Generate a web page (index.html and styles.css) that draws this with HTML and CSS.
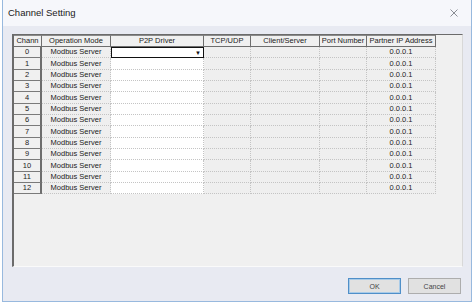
FILE: index.html
```html
<!DOCTYPE html>
<html lang="en">
<head>
<meta charset="UTF-8" />
<title>Channel Setting</title>
<link rel="stylesheet" href="styles.css">
</head>
<body>
<div class="dialog">
  <div class="titlebar">
    <span class="title">Channel Setting</span>
    <svg class="close" width="8" height="8" viewBox="0 0 8 8"><path d="M0.5 0.5 L7.5 7.5 M7.5 0.5 L0.5 7.5" stroke="#8a8d94" stroke-width="1"/></svg>
  </div>
  <div class="content">
    <div class="panel">
      <div class="grid" id="grid">
        <div class="hd">Chann</div>
        <div class="hd">Operation Mode</div>
        <div class="hd">P2P Driver</div>
        <div class="hd">TCP/UDP</div>
        <div class="hd">Client/Server</div>
        <div class="hd">Port Number</div>
        <div class="hd">Partner IP Address</div>
      </div>
    </div>
    <div class="buttons">
      <button class="btn default">OK</button>
      <button class="btn">Cancel</button>
    </div>
  </div>
</div>
<script>
const grid = document.getElementById("grid");
for (let i = 0; i <= 12; i++) {
  let html = '<div class="rh">' + i + '</div>';
  html += '<div class="cell ro">Modbus Server</div>';
  if (i === 0) {
    html += '<div class="cell edit active"><span class="arrow">&#9660;</span></div>';
  } else {
    html += '<div class="cell edit"></div>';
  }
  html += '<div class="cell ro"></div>';
  html += '<div class="cell ro"></div>';
  html += '<div class="cell ro"></div>';
  html += '<div class="cell ro">0.0.0.1</div>';
  grid.insertAdjacentHTML("beforeend", html);
}
</script>
</body>
</html>
```

FILE: styles.css
```css
body {
  margin: 0;
  background: #ffffff;
  font-family: "Liberation Sans", Arial, sans-serif;
}
.dialog {
  margin: 0 2px 0 2px;
  width: 468px;
  height: 301px;
  border: 1px solid #98b9de;
  border-top: none;
  background: #e8eaf2;
  display: flex;
  flex-direction: column;
}
.titlebar {
  height: 25px;
  background: #f6f7fb;
  display: flex;
  align-items: center;
  justify-content: space-between;
  padding: 0 13px 1px 5px;
}
.title {
  font-size: 9.5px;
  color: #1a1a1a;
}
.close {
  display: block;
}
.content {
  flex: 1;
  padding: 8px 9px 0 9px;
  display: flex;
  flex-direction: column;
}
.panel {
  width: 448px;
  height: 231px;
  background: #f0f0f0;
  border-top: 1px solid #6b6b6b;
  border-left: 2px solid #6b6b6b;
  border-right: 1px solid #d8d8d8;
  border-bottom: 1px solid #fafafa;
}
.grid {
  display: grid;
  grid-template-columns: 28px 69px 93px 47px 69px 47px 69px;
  grid-template-rows: 12px;
  grid-auto-rows: 11.33px;
  width: 422px;
  font-size: 7.5px;
  color: #222;
}
.grid > div {
  box-sizing: border-box;
  display: flex;
  align-items: center;
  justify-content: center;
  white-space: nowrap;
  overflow: hidden;
  line-height: 1;
}
.hd {
  background: #f0f0f0;
  border-right: 1px solid #6e6e6e;
  border-bottom: 1px solid #6e6e6e;
  border-top: 1px solid #8a8a8a;
}
.rh {
  background: #f0f0f0;
  border-right: 2px solid #6e6e6e;
  border-bottom: 1px solid #7a7a7a;
}
.cell {
  border-right: 1px dotted #c4c4c4;
  border-bottom: 1px dotted #c4c4c4;
}
.ro {
  background: #efefef;
}
.edit {
  background: #ffffff;
}
.active {
  border: 1.5px solid #111;
  justify-content: flex-end !important;
  padding-right: 2px;
}
.arrow {
  font-size: 6px;
  color: #111;
}
.buttons {
  display: flex;
  justify-content: flex-end;
  gap: 7px;
  margin-top: 11px;
  padding-right: 1px;
}
.btn {
  width: 53px;
  height: 16px;
  padding: 0;
  font-family: "Liberation Sans", Arial, sans-serif;
  font-size: 7px;
  color: #444;
  background: #e1e1e1;
  border: 1px solid #adadad;
}
.btn.default {
  border: 1px solid #4f8fc9;
  box-shadow: inset 0 0 0 1px #a9cbe8;
}
```
